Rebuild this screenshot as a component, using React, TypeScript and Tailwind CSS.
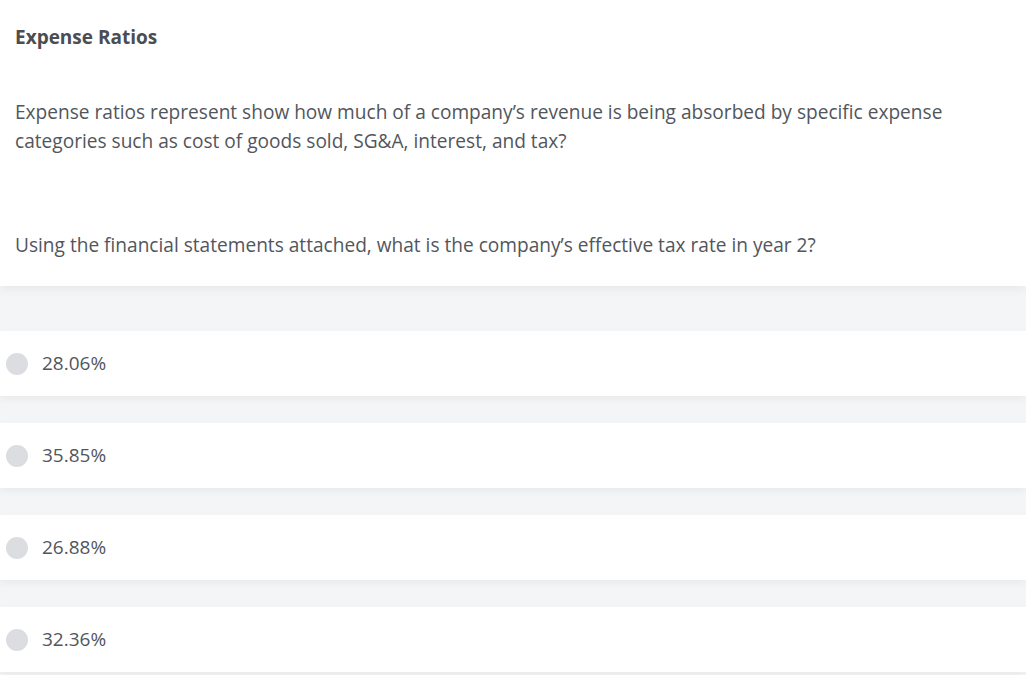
import React from "react";

const options = ["28.06%", "35.85%", "26.88%", "32.36%"];

export default function App() {
  return (
    <div
      className="min-h-[675px] w-full bg-[#f4f5f7] text-[#52565c]"
      style={{ fontFamily: '"Open Sans", "Noto Sans", Arial, sans-serif' }}
    >
      <div className="relative z-10 bg-white px-[15px] pt-[23px] pb-[26px] shadow-[0_3px_10px_rgba(0,0,0,0.06)]">
        <h1 className="text-[19px] font-bold leading-[29px] text-[#4a4d52]">Expense Ratios</h1>
        <p className="mt-[46px] text-[19.1px] leading-[29px]">
          Expense ratios represent show how much of a company’s revenue is being absorbed by specific expense
          categories such as cost of goods sold, SG&amp;A, interest, and tax?
        </p>
        <p className="mt-[75px] text-[19.1px] leading-[29px]">
          Using the financial statements attached, what is the company’s effective tax rate in year 2?
        </p>
      </div>
      <div className="flex flex-col gap-[27px] pt-[45px]">
        {options.map((o) => (
          <div
            key={o}
            className="flex h-[65px] items-center bg-white shadow-[0_3px_8px_rgba(0,0,0,0.05)]"
          >
            <span className="ml-[6px] h-[22px] w-[22px] shrink-0 rounded-full bg-[#dcdde0]" />
            <span className="ml-[14px] text-[19px] leading-[29px]">{o}</span>
          </div>
        ))}
      </div>
    </div>
  );
}
